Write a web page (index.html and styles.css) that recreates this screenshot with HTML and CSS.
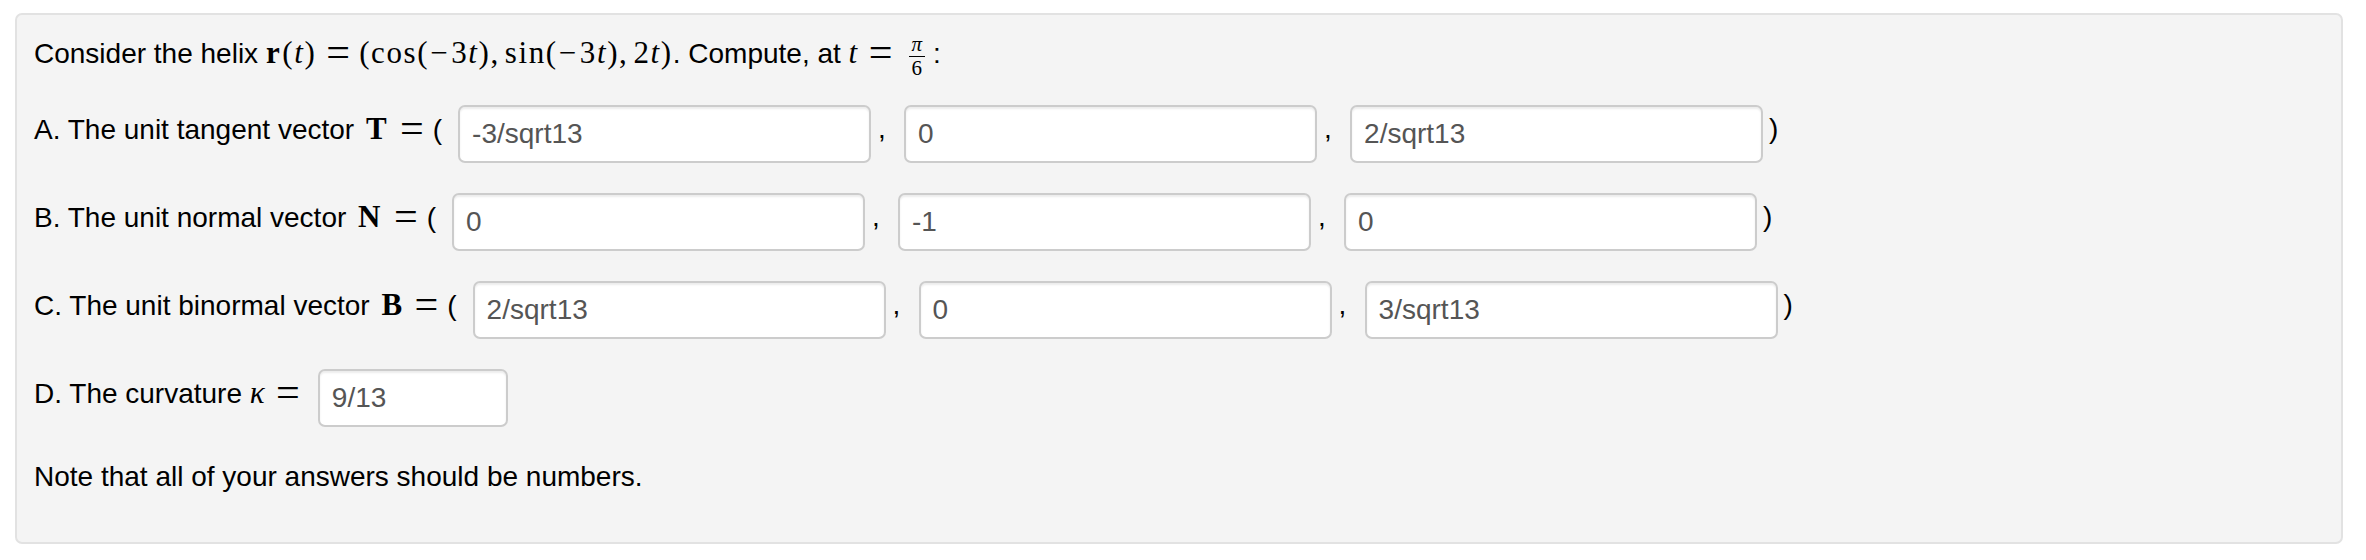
FILE: index.html
```html
<!DOCTYPE html>
<html>
<head>
<meta charset="utf-8">
<link rel="stylesheet" href="styles.css">
</head>
<body>
<div class="problem">
  <p class="line1">Consider the helix <span class="m"><b>r</b>(<i>t</i>)<span class="eq">=</span>(cos(<span class="mi">−</span>3<i>t</i>),<span class="th"></span>sin(<span class="mi">−</span>3<i>t</i>),<span class="th"></span>2<i>t</i>)</span>. Compute, at <span class="m"><i>t</i><span class="eq">=</span><span class="frac"><span class="num">π</span><span class="den">6</span></span></span>:</p>

  <div class="row">
    <span class="lbl">A. The unit tangent vector <span class="m"><b>T</b><span class="eq">=</span></span>(</span>
    <input class="ans first" type="text" value="-3/sqrt13">
    <span class="sep">,</span>
    <input class="ans" type="text" value="0">
    <span class="sep">,</span>
    <input class="ans" type="text" value="2/sqrt13">
    <span class="close">)</span>
  </div>

  <div class="row">
    <span class="lbl">B. The unit normal vector <span class="m"><b>N</b><span class="eq">=</span></span>(</span>
    <input class="ans first" type="text" value="0">
    <span class="sep">,</span>
    <input class="ans" type="text" value="-1">
    <span class="sep">,</span>
    <input class="ans" type="text" value="0">
    <span class="close">)</span>
  </div>

  <div class="row">
    <span class="lbl">C. The unit binormal vector <span class="m"><b class="wide">B</b><span class="eq">=</span></span>(</span>
    <input class="ans first" type="text" value="2/sqrt13">
    <span class="sep">,</span>
    <input class="ans" type="text" value="0">
    <span class="sep">,</span>
    <input class="ans" type="text" value="3/sqrt13">
    <span class="close">)</span>
  </div>

  <div class="row">
    <span class="lbl">D. The curvature <span class="m"><i>κ</i><span class="eq">=</span></span></span>
    <input class="ans small" type="text" value="9/13">
  </div>

  <p class="note">Note that all of your answers should be numbers.</p>
</div>
</body>
</html>
```

FILE: styles.css
```css
html, body {
  margin: 0;
  padding: 0;
  background: #ffffff;
}

body {
  font-family: "Liberation Sans", Arial, Helvetica, sans-serif;
  font-size: 28px;
  color: #000;
}

.problem {
  margin: 13px 0 0 15px;
  width: 2328px;
  height: 531px;
  box-sizing: border-box;
  background: #f4f4f4;
  border: 2px solid #e2e2e2;
  border-radius: 7px;
  padding: 18px 0 0 17px;
}

.line1 {
  margin: 0;
  height: 40px;
  line-height: 40px;
  white-space: nowrap;
}

.m {
  font-family: "Liberation Serif", "Times New Roman", serif;
  font-size: 31px;
  letter-spacing: 1.4px;
}

.line1 .m {
  letter-spacing: 1.6px;
}

.m b {
  font-weight: bold;
  padding: 0 2px 0 4px;
}

.line1 .m b {
  padding: 0 1px 0 0;
}

.m b.wide {
  padding-right: 1px;
}

.m i {
  font-style: italic;
}

.eq {
  font-size: 1.36em;
  line-height: 0;
  vertical-align: -3px;
  margin: 0 9px 0 10px;
  letter-spacing: 0;
}

.mi {
  margin: 0 2px 0 1px;
}

.th {
  display: inline-block;
  width: 5px;
}

.frac {
  display: inline-flex;
  flex-direction: column;
  align-items: center;
  vertical-align: 12px;
  font-size: 21px;
  line-height: 1;
  margin: 0 8px 0 7px;
  letter-spacing: 0;
}

.frac .num {
  padding: 0 3px 1px;
  border-bottom: 1.5px solid #000;
  font-style: italic;
}

.frac .den {
  padding-top: 1px;
}

.row {
  display: flex;
  align-items: flex-start;
  height: 58px;
  margin-top: 30px;
  white-space: nowrap;
}

.line1 + .row {
  margin-top: 32px;
}

.lbl,
.sep,
.close {
  line-height: 40px;
  margin-top: 4px;
}

.ans {
  width: 413px;
  height: 58px;
  box-sizing: border-box;
  margin: 0;
  padding: 0 12px;
  border: 2px solid #cccccc;
  border-radius: 7px;
  background: #ffffff;
  box-shadow: inset 0 2px 2px rgba(0, 0, 0, 0.075);
  font-family: "Liberation Sans", Arial, Helvetica, sans-serif;
  font-size: 28px;
  color: #555555;
  outline: none;
}

.ans.first {
  margin-left: 16px;
}

.ans.small {
  width: 190px;
  margin-left: 9px;
}

.sep {
  width: 33px;
  box-sizing: border-box;
  padding-left: 7px;
}

.close {
  margin-left: 6px;
}

.note {
  margin: 30px 0 0 0;
  line-height: 40px;
}
```
